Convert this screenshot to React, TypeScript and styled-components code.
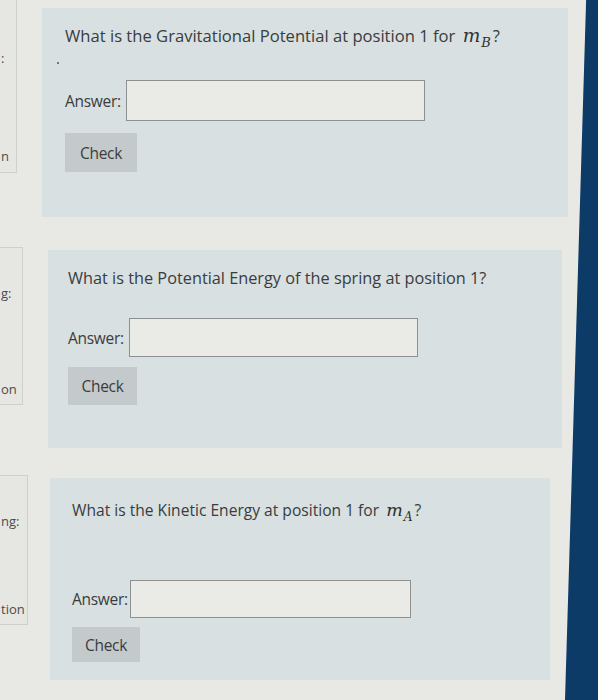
import React from "react";
import styled, { createGlobalStyle } from "styled-components";

const Global = createGlobalStyle`
  html, body { margin: 0; padding: 0; }
  body {
    background: #e8e9e4;
    font-family: "Open Sans", "Noto Sans", "Liberation Sans", sans-serif;
    color: #3b3d3e;
  }
`;

const Page = styled.div`
  display: flex;
  width: 598px;
  height: 700px;
  overflow: hidden;
  background: #e8e9e4;
`;

const Sidebar = styled.div`
  width: 30px;
  flex: none;
  display: flex;
  flex-direction: column;
`;

const SideCard = styled.div<{ $right: number; $top: number; $height: number }>`
  box-sizing: border-box;
  width: ${(p) => p.$right + 20}px;
  margin-left: -20px;
  margin-top: ${(p) => p.$top}px;
  height: ${(p) => p.$height}px;
  border: 1px solid #cfd0cd;
  background: #e6e7e3;
  position: relative;
  font-size: 13px;
  color: #4a4c4d;
  white-space: nowrap;
`;

const SideLine = styled.div<{ $y: number }>`
  position: absolute;
  left: 20px;
  top: ${(p) => p.$y - 9}px;
  line-height: 18px;
`;

const Main = styled.div`
  flex: 1;
  display: flex;
  flex-direction: column;
  min-width: 0;
`;

const Card = styled.section<{
  $left: number;
  $width: number;
  $top: number;
  $height: number;
  $padTop: number;
  $padLeft: number;
}>`
  box-sizing: border-box;
  position: relative;
  flex: none;
  margin-left: ${(p) => p.$left}px;
  margin-top: ${(p) => p.$top}px;
  width: ${(p) => p.$width}px;
  height: ${(p) => p.$height}px;
  padding: ${(p) => p.$padTop}px 0 0 ${(p) => p.$padLeft}px;
  background: #d8e0e1;
  display: flex;
  flex-direction: column;
`;

const Question = styled.p<{ $gap: number; $size: number }>`
  margin: 0 0 ${(p) => p.$gap}px 0;
  height: 24px;
  font-size: ${(p) => p.$size}px;
  line-height: 24px;
  color: #3a3c3d;
  white-space: nowrap;
`;

const MathVar = styled.span`
  font-family: "DejaVu Serif", "Liberation Serif", serif;
  font-style: italic;
  font-size: 1.12em;
  line-height: 0;
  color: #2f3132;
  margin: 0 2px 0 3px;
`;

const Sub = styled.sub`
  font-family: "DejaVu Serif", "Liberation Serif", serif;
  font-style: italic;
  font-size: 0.7em;
  line-height: 0;
  vertical-align: -0.4em;
  margin-left: 1px;
`;

const AnswerRow = styled.div`
  display: flex;
  align-items: center;
`;

const Label = styled.label<{ $w: number }>`
  width: ${(p) => p.$w}px;
  font-size: 15.5px;
  color: #3a3c3d;
  letter-spacing: -0.3px;
`;

const Input = styled.input<{ $w: number; $h: number }>`
  box-sizing: border-box;
  width: ${(p) => p.$w}px;
  height: ${(p) => p.$h}px;
  border: 1px solid #8e9090;
  background: #eaebe6;
  outline: none;
`;

const CheckButton = styled.button<{ $w: number; $h: number; $gap: number }>`
  box-sizing: border-box;
  margin-top: ${(p) => p.$gap}px;
  width: ${(p) => p.$w}px;
  height: ${(p) => p.$h}px;
  border: none;
  background: #c4cacc;
  font-family: "Open Sans", "Noto Sans", sans-serif;
  font-size: 15.5px;
  color: #3a3c3d;
  letter-spacing: -0.3px;
  padding: 0;
`;

const BlueBar = styled.div`
  width: 33px;
  flex: none;
  background: #0c3b68;
  clip-path: polygon(64% 0, 100% 0, 100% 100%, 0 100%);
`;

const Dot = styled.span`
  position: absolute;
  left: 15px;
  top: 54px;
  width: 2px;
  height: 2px;
  background: #555;
  border-radius: 1px;
`;

type Q = {
  text: string;
  v?: string;
  left: number;
  width: number;
  top: number;
  height: number;
  padTop: number;
  padLeft: number;
  size: number;
  qGap: number;
  labelW: number;
  inputW: number;
  inputH: number;
  btnW: number;
  btnH: number;
  btnGap: number;
};

const questions: Q[] = [
  {
    text: "What is the Gravitational Potential at position 1 for",
    v: "B",
    left: 12,
    width: 526,
    top: 8,
    height: 209,
    padTop: 16,
    padLeft: 23,
    size: 16.6,
    qGap: 32,
    labelW: 61,
    inputW: 299,
    inputH: 41,
    btnW: 72,
    btnH: 39,
    btnGap: 12,
  },
  {
    text: "What is the Potential Energy of the spring at position 1?",
    left: 18,
    width: 514,
    top: 33,
    height: 198,
    padTop: 16,
    padLeft: 20,
    size: 16.3,
    qGap: 28,
    labelW: 61,
    inputW: 289,
    inputH: 39,
    btnW: 69,
    btnH: 38,
    btnGap: 10,
  },
  {
    text: "What is the Kinetic Energy at position 1 for",
    v: "A",
    left: 20,
    width: 500,
    top: 30,
    height: 202,
    padTop: 20,
    padLeft: 22,
    size: 15.6,
    qGap: 58,
    labelW: 58,
    inputW: 281,
    inputH: 38,
    btnW: 68,
    btnH: 35,
    btnGap: 9,
  },
];

export default function App() {
  return (
    <>
      <Global />
      <Page>
        <Sidebar>
          <SideCard $right={17} $top={-2} $height={175}>
            <SideLine $y={59}>:</SideLine>
            <SideLine $y={157}>n</SideLine>
          </SideCard>
          <SideCard $right={23} $top={74} $height={158}>
            <SideLine $y={45}>g:</SideLine>
            <SideLine $y={141}>on</SideLine>
          </SideCard>
          <SideCard $right={28} $top={70} $height={150}>
            <SideLine $y={45}>ng:</SideLine>
            <SideLine $y={133}>tion</SideLine>
          </SideCard>
        </Sidebar>
        <Main>
          {questions.map((q, i) => (
            <Card
              key={i}
              $left={q.left}
              $width={q.width}
              $top={q.top}
              $height={q.height}
              $padTop={q.padTop}
              $padLeft={q.padLeft}
            >
              {i === 0 && <Dot />}
              <Question $gap={q.qGap} $size={q.size}>
                {q.text}
                {q.v && (
                  <>
                    {" "}
                    <MathVar>
                      m<Sub>{q.v}</Sub>
                    </MathVar>
                    ?
                  </>
                )}
              </Question>
              <AnswerRow>
                <Label $w={q.labelW}>Answer:</Label>
                <Input $w={q.inputW} $h={q.inputH} />
              </AnswerRow>
              <CheckButton $w={q.btnW} $h={q.btnH} $gap={q.btnGap}>
                Check
              </CheckButton>
            </Card>
          ))}
        </Main>
        <BlueBar />
      </Page>
    </>
  );
}
